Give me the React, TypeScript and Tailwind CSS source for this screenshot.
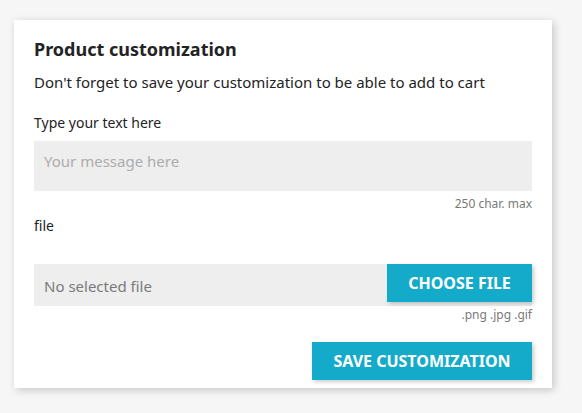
export default function App() {
  return (
    <div className="min-h-screen bg-[#f6f6f6] pt-5 pl-[14px] font-['Noto_Sans',sans-serif] text-[#232323]">
      <div className="w-[538px] bg-white px-5 pt-[17px] pb-[8px] shadow-[2px_2px_8px_0_rgba(0,0,0,0.2)]">
        <h3 className="text-[18px] font-bold leading-[24px]">Product customization</h3>
        <p className="mt-[10px] text-[15px] leading-[22px]">
          Don't forget to save your customization to be able to add to cart
        </p>
        <label className="mt-[20px] block text-[14px] leading-[20px]">Type your text here</label>
        <div className="mt-[8px] h-[50px] bg-[#eeeeee] px-[10px] pt-[9px] text-[15px] leading-[22px] text-[#acacac]">
          Your message here
        </div>
        <div className="mt-[5px] text-right text-[12px] leading-[16px] text-[#7a7a7a]">250 char. max</div>
        <label className="mt-[4px] block text-[14px] leading-[20px]">file</label>
        <div className="mt-[28px] flex h-[42px] bg-[#eeeeee]">
          <div className="flex flex-1 items-center px-[10px] pt-[3px] text-[15px] text-[#7a7a7a]">No selected file</div>
          <button className="h-[38px] w-[145px] bg-[#14abca] text-[16px] font-bold uppercase text-white shadow-[2px_2px_4px_0_rgba(0,0,0,0.2)]">
            Choose file
          </button>
        </div>
        <div className="mt-[1px] text-right text-[12px] leading-[16px] text-[#7a7a7a]">.png .jpg .gif</div>
        <div className="mt-[19px] flex justify-end">
          <button className="h-[38px] w-[220px] bg-[#14abca] text-[16px] font-bold uppercase text-white shadow-[2px_2px_4px_0_rgba(0,0,0,0.2)]">
            Save customization
          </button>
        </div>
      </div>
    </div>
  );
}
